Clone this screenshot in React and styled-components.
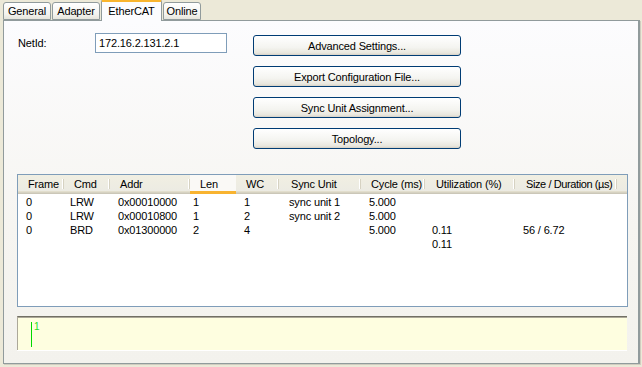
import React from 'react';
import styled, { createGlobalStyle } from 'styled-components';

const GlobalStyle = createGlobalStyle`
  html, body {
    margin: 0;
    padding: 0;
    background: #ece9d8;
  }
  body {
    font-family: "Liberation Sans", Arial, sans-serif;
    font-size: 11px;
    letter-spacing: -0.15px;
    color: #000;
  }
`;

const Window = styled.div`
  width: 642px;
  height: 367px;
  background: #ece9d8;
  display: flex;
  flex-direction: column;
  padding: 0 2px 3px 3px;
  box-sizing: border-box;
  overflow: hidden;
`;

const TabStrip = styled.div`
  height: 20px;
  display: flex;
  align-items: flex-end;
  position: relative;
  z-index: 1;
`;

const Tab = styled.div`
  box-sizing: border-box;
  height: ${({ $active }) => ($active ? '22px' : '18px')};
  margin-bottom: ${({ $active }) => ($active ? '-1px' : '0')};
  margin-right: 1px;
  padding-top: ${({ $active }) => ($active ? '2px' : '1px')};
  border: 1px solid #919b9c;
  border-bottom: ${({ $active }) => ($active ? 'none' : '1px solid #919b9c')};
  border-top: ${({ $active }) => ($active ? '3px solid #f9b52e' : '1px solid #919b9c')};
  border-radius: 3px 3px 0 0;
  background: ${({ $active }) =>
    $active ? '#fcfcfe' : 'linear-gradient(#ffffff, #f3f3ef 70%, #e6e5dc)'};
  line-height: 15px;
  white-space: nowrap;
  width: ${({ $w }) => $w}px;
  text-align: center;
`;

const Panel = styled.div`
  flex: 1;
  border: 1px solid #919b9c;
  border-right: 2px solid #919b9c;
  box-shadow: 1px 1px 0 #d0cdc0;
  background: linear-gradient(#fcfcfe, #f6f5f1 60%, #f3f2ed);
  padding: 12px 9px 0 13px;
  display: flex;
  flex-direction: column;
`;

const TopRow = styled.div`
  display: flex;
  align-items: flex-start;
`;

const Field = styled.div`
  width: 236px;
  display: flex;
  align-items: center;
`;

const Label = styled.label`
  width: 78px;
  padding-left: 1px;
  box-sizing: border-box;
`;

const TextBox = styled.div`
  width: 132px;
  height: 20px;
  box-sizing: border-box;
  border: 1px solid #7f9db9;
  background: #fff;
  padding: 2px 3px;
  line-height: 14px;
`;

const ButtonColumn = styled.div`
  margin-top: 2px;
  display: flex;
  flex-direction: column;
  gap: 10px;
`;

const Button = styled.button`
  width: 208px;
  height: 21px;
  border: 1px solid #003c74;
  border-radius: 3px;
  background: linear-gradient(#ffffff, #f4f4f0 60%, #e8e6dd 90%, #d6d0c5);
  font-family: inherit;
  font-size: 11px;
  letter-spacing: inherit;
  color: #000;
  padding: 0;
  cursor: default;
`;

const List = styled.div`
  margin-top: 25px;
  width: 611px;
  height: 133px;
  box-sizing: border-box;
  border: 1px solid #7f9db9;
  background: #fff;
`;

const COLS = '46px 46px 80px 46px 43px 82px 64px 90px 102px 1fr';

const HeaderRow = styled.div`
  display: grid;
  grid-template-columns: ${COLS};
  height: 19px;
  background: linear-gradient(#f1efe2, #ebeae3);
  box-shadow: inset 0 -1px 0 #cbc7b8, inset 0 -2px 0 #d6d2c2, inset 0 -3px 0 #e2decd;
`;

const HeaderCell = styled.div`
  position: relative;
  padding-left: ${({ $pad }) => $pad ?? 10}px;
  line-height: 18px;
  white-space: nowrap;
  letter-spacing: ${({ $tight }) => ($tight ? '-0.4px' : 'inherit')};
  background: ${({ $hot }) => ($hot ? '#faf9f6' : 'transparent')};
  box-shadow: ${({ $hot }) => ($hot ? 'inset 0 -3px 0 #f8b330' : 'none')};
  &::after {
    content: '';
    position: absolute;
    right: 0;
    top: 4px;
    bottom: 5px;
    width: 1px;
    background: #d6d2c2;
    box-shadow: -1px 0 0 #fff;
    display: ${({ $sep }) => ($sep ? 'block' : 'none')};
  }
`;

const Rows = styled.div`
  padding-top: 1px;
`;

const Row = styled.div`
  display: grid;
  grid-template-columns: ${COLS};
  height: 14px;
  line-height: 14px;
`;

const Cell = styled.div`
  padding-left: ${({ $pad }) => $pad}px;
  white-space: nowrap;
`;

const Editor = styled.div`
  margin-top: 9px;
  width: 610px;
  height: 34px;
  box-sizing: border-box;
  background: #fefee0;
  border-top: 1px solid #716f64;
  border-left: 1px solid #aca899;
  box-shadow: inset 0 1px 0 #aca899, 0 1px 0 #fff;
  padding: 5px 0 0 13px;
`;

const Caret = styled.div`
  height: 25px;
  border-left: 1px solid #00d800;
  padding-left: 2px;
  color: #22e022;
  font-size: 10px;
  line-height: 10px;
`;

const columns = [
  { title: 'Frame', pad: 8 },
  { title: 'Cmd', pad: 6 },
  { title: 'Addr', pad: 8 },
  { title: 'Len', pad: 3, hot: true },
  { title: 'WC', pad: 8 },
  { title: 'Sync Unit', pad: 10, hpad: 12 },
  { title: 'Cycle (ms)', pad: 8 },
  { title: 'Utilization (%)', pad: 7, hpad: 11 },
  { title: 'Size / Duration (µs)', pad: 8, hpad: 11, tight: true },
];

const rows = [
  ['0', 'LRW', '0x00010000', '1', '1', 'sync unit 1', '5.000', '', ''],
  ['0', 'LRW', '0x00010800', '1', '2', 'sync unit 2', '5.000', '', ''],
  ['0', 'BRD', '0x01300000', '2', '4', '', '5.000', '0.11', '56 / 6.72'],
  ['', '', '', '', '', '', '', '0.11', ''],
];

const tabs = [
  { name: 'General', w: 48 },
  { name: 'Adapter', w: 48 },
  { name: 'EtherCAT', w: 61, active: true },
  { name: 'Online', w: 38 },
];

const buttons = [
  'Advanced Settings...',
  'Export Configuration File...',
  'Sync Unit Assignment...',
  'Topology...',
];

export default function App() {
  return (
    <>
      <GlobalStyle />
      <Window>
        <TabStrip>
          {tabs.map((t) => (
            <Tab key={t.name} $active={t.active} $w={t.w}>
              {t.name}
            </Tab>
          ))}
        </TabStrip>
        <Panel>
          <TopRow>
            <Field>
              <Label>NetId:</Label>
              <TextBox>172.16.2.131.2.1</TextBox>
            </Field>
            <ButtonColumn>
              {buttons.map((b) => (
                <Button key={b}>{b}</Button>
              ))}
            </ButtonColumn>
          </TopRow>
          <List>
            <HeaderRow>
              {columns.map((c) => (
                <HeaderCell
                  key={c.title}
                  $pad={c.hpad}
                  $hot={c.hot}
                  $sep={!c.hot}
                  $tight={c.tight}
                >
                  {c.title}
                </HeaderCell>
              ))}
              <HeaderCell />
            </HeaderRow>
            <Rows>
              {rows.map((r, i) => (
                <Row key={i}>
                  {r.map((v, j) => (
                    <Cell key={j} $pad={columns[j].pad}>
                      {v}
                    </Cell>
                  ))}
                </Row>
              ))}
            </Rows>
          </List>
          <Editor>
            <Caret>1</Caret>
          </Editor>
        </Panel>
      </Window>
    </>
  );
}
